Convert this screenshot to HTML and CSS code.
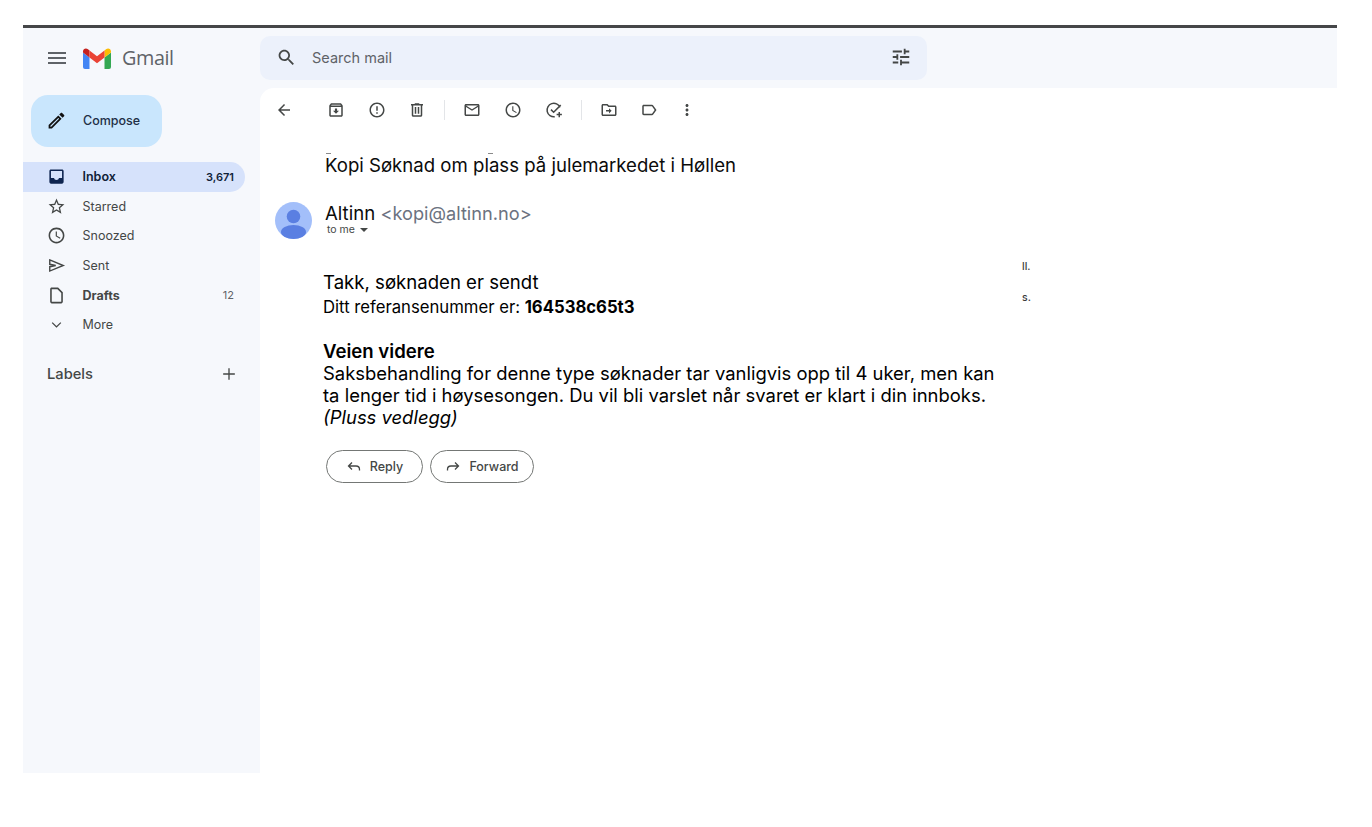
FILE: index.html
```html
<!DOCTYPE html>
<html lang="en">
<head>
<meta charset="utf-8">
<title>Gmail</title>
<link rel="stylesheet" href="styles.css">
</head>
<body>
<div class="frame">
  <aside class="sidebar">
    <div class="brand">
      <svg class="ic ic-menu" viewBox="0 0 24 24"><path d="M3 18h18v-2H3v2zm0-5h18v-2H3v2zm0-7v2h18V6H3z"/></svg>
      <svg class="logo" viewBox="0 0 28 21">
        <path fill="#4285f4" d="M2 21h4.5V9.5L0 4.5V19a2 2 0 0 0 2 2z"/>
        <path fill="#34a853" d="M21.5 21H26a2 2 0 0 0 2-2V4.500l-6.500 5z"/>
        <path fill="#fbbc04" d="M21.500 2.500v7l6.500-5V3.500c0-2.700-3-4-5-2.200z"/>
        <path fill="#c5221f" d="M0 4.500l6.500 5v-7L5 1.300C3-.4 0 .8 0 3.500z"/>
        <path fill="#ea4335" d="M6.500 9.500v-7L14 8.200l7.500-5.700v7L14 15.200z"/>
      </svg>
      <span class="wordmark">Gmail</span>
    </div>
    <button class="compose">
      <svg class="ic ic-pencil" viewBox="0 0 24 24"><path d="M3 17.250V21h3.750L17.810 9.940l-3.750-3.750L3 17.250zM5.920 19H5v-.92l9.060-9.060.92.92L5.920 19zM20.710 5.630l-2.340-2.340c-.2-.2-.45-.29-.71-.29s-.51.1-.7.29l-1.830 1.830 3.750 3.750 1.830-1.830c.39-.39.39-1.020 0-1.410z"/></svg>
      <span>Compose</span>
    </button>
    <nav class="nav">
      <a class="row active">
        <svg class="ic" viewBox="0 0 24 24"><path fill-rule="evenodd" d="M19 3H5c-1.100 0-2 .9-2 2v14c0 1.100.9 2 2 2h14c1.100 0 2-.9 2-2V5c0-1.100-.9-2-2-2zm0 11h-4c0 1.660-1.350 2.500-3 2.500S9 15.660 9 14H5V5h14v9z"/></svg>
        <span class="label">Inbox</span><span class="count">3,671</span>
      </a>
      <a class="row">
        <svg class="ic" viewBox="0 0 24 24"><path d="M22 9.240l-7.190-.62L12 2 9.190 8.630 2 9.240l5.460 4.730L5.820 21 12 17.270 18.180 21l-1.630-7.030L22 9.240zM12 15.400l-3.760 2.270 1-4.280-3.320-2.880 4.380-.38L12 6.100l1.710 4.040 4.380.38-3.320 2.880 1 4.280L12 15.400z"/></svg>
        <span class="label">Starred</span>
      </a>
      <a class="row">
        <svg class="ic" viewBox="0 0 24 24"><path d="M11.990 2C6.470 2 2 6.480 2 12s4.470 10 9.990 10C17.520 22 22 17.520 22 12S17.520 2 11.990 2zM12 20c-4.420 0-8-3.580-8-8s3.580-8 8-8 8 3.580 8 8-3.580 8-8 8zm.5-13H11v6l5.250 3.150.75-1.230-4.500-2.670z"/></svg>
        <span class="label">Snoozed</span>
      </a>
      <a class="row">
        <svg class="ic ic-sent" viewBox="0 0 24 24"><path d="M3.500 5L20.500 12 3.500 19v-5.500L11 12 3.500 10.500z"/></svg>
        <span class="label">Sent</span>
      </a>
      <a class="row strong">
        <svg class="ic" viewBox="0 0 24 24"><path d="M6 2c-1.100 0-2 .9-2 2v16c0 1.100.9 2 2 2h12c1.100 0 2-.9 2-2V8l-6-6H6zm0 2h7.200L18 8.800V20H6V4z"/></svg>
        <span class="label">Drafts</span><span class="count light">12</span>
      </a>
      <a class="row">
        <svg class="ic" viewBox="0 0 24 24"><path d="M16.900 9.100L12 14 7.100 9.100 6 10.200l6 6 6-6z"/></svg>
        <span class="label">More</span>
      </a>
    </nav>
    <div class="labels">
      <span>Labels</span>
      <svg class="ic" viewBox="0 0 24 24"><path d="M19 12.800h-6.200V19h-1.600v-6.200H5v-1.600h6.200V5h1.600v6.200H19z"/></svg>
    </div>
  </aside>

  <main class="main">
    <div class="search">
      <svg class="ic ic-search" viewBox="0 0 24 24"><path d="M15.500 14h-.79l-.28-.27C15.410 12.590 16 11.110 16 9.500 16 5.910 13.090 3 9.500 3S3 5.910 3 9.500 5.910 16 9.500 16c1.610 0 3.090-.59 4.230-1.570l.27.28v.79l5 4.990L20.490 19l-4.990-5zm-6 0C7.010 14 5 11.990 5 9.500S7.010 5 9.500 5 14 7.010 14 9.500 11.990 14 9.500 14z"/></svg>
      <span class="placeholder">Search mail</span>
      <svg class="ic ic-tune" viewBox="0 0 24 24"><path d="M3 17v2h6v-2H3zM3 5v2h10V5H3zm10 16v-2h8v-2h-8v-2h-2v6h2zM7 9v2H3v2h4v2h2V9H7zm14 4v-2H11v2h10zm-6-4h2V7h4V5h-4V3h-2v6z"/></svg>
    </div>
    <section class="panel">
      <div class="toolbar">
        <svg class="tool back" viewBox="0 0 24 24"><path d="M20 11H7.830l5.590-5.590L12 4l-8 8 8 8 1.410-1.410L7.830 13H20v-2z"/></svg>
        <div class="tool-group first">
          <svg class="tool" viewBox="0 0 24 24"><path d="M20.540 5.230l-1.390-1.680C18.880 3.210 18.470 3 18 3H6c-.47 0-.88.21-1.160.55L3.460 5.230C3.170 5.570 3 6.020 3 6.500V19c0 1.100.9 2 2 2h14c1.100 0 2-.9 2-2V6.500c0-.48-.17-.93-.46-1.270zM6.240 5h11.520l.81.97H5.440l.8-.97zM5 19V8h14v11H5zm8.450-9h-2.900v3H8l4 4 4-4h-2.550z"/></svg>
          <svg class="tool" viewBox="0 0 24 24"><path d="M12 2C6.480 2 2 6.480 2 12s4.480 10 10 10 10-4.480 10-10S17.520 2 12 2zm0 18c-4.420 0-8-3.580-8-8s3.580-8 8-8 8 3.580 8 8-3.580 8-8 8zM11 7h2v6h-2zm0 8h2v2h-2z"/></svg>
          <svg class="tool" viewBox="0 0 24 24"><path d="M15 4V3H9v1H4v2h1v13c0 1.100.9 2 2 2h10c1.100 0 2-.9 2-2V6h1V4h-5zm2 15H7V6h10v13zM9 8h2v9H9zm4 0h2v9h-2z"/></svg>
        </div>
        <span class="sep"></span>
        <div class="tool-group">
          <svg class="tool" viewBox="0 0 24 24"><path d="M22 6c0-1.100-.9-2-2-2H4c-1.100 0-2 .9-2 2v12c0 1.100.9 2 2 2h16c1.100 0 2-.9 2-2V6zm-2 0l-8 5-8-5h16zm0 12H4V8l8 5 8-5v10z"/></svg>
          <svg class="tool" viewBox="0 0 24 24"><path d="M11.990 2C6.470 2 2 6.480 2 12s4.470 10 9.990 10C17.520 22 22 17.520 22 12S17.520 2 11.990 2zM12 20c-4.420 0-8-3.580-8-8s3.580-8 8-8 8 3.580 8 8-3.580 8-8 8zm.5-13H11v6l5.250 3.150.75-1.230-4.500-2.670z"/></svg>
          <svg class="tool stroke" viewBox="0 0 24 24"><path d="M20 8.500A9 9 0 1 0 13 21M8 11.500l3.500 3.500L21 5.500M19 14.500v7M15.500 18h7"/></svg>
        </div>
        <span class="sep"></span>
        <div class="tool-group">
          <svg class="tool" viewBox="0 0 24 24"><path d="M20 6h-8l-2-2H4c-1.100 0-1.990.9-1.990 2L2 18c0 1.100.9 2 2 2h16c1.100 0 2-.9 2-2V8c0-1.100-.9-2-2-2zm0 12H4V6h5.170l2 2H20v10zm-8-4H8v-2h4V9.500l3.500 3.500-3.500 3.500V14z"/></svg>
          <svg class="tool" viewBox="0 0 24 24"><path d="M17.630 5.840C17.270 5.330 16.670 5 16 5L5 5.010C3.900 5.010 3 5.900 3 7v10c0 1.100.9 1.990 2 1.990L16 19c.67 0 1.270-.33 1.630-.84L22 12l-4.370-6.160zM16 17H5V7h11l3.550 5L16 17z"/></svg>
          <svg class="tool more" viewBox="0 0 24 24"><path d="M12 8c1.100 0 2-.9 2-2s-.9-2-2-2-2 .9-2 2 .9 2 2 2zm0 2c-1.100 0-2 .9-2 2s.9 2 2 2 2-.9 2-2-.9-2-2-2zm0 6c-1.100 0-2 .9-2 2s.9 2 2 2 2-.9 2-2-.9-2-2-2z"/></svg>
        </div>
      </div>

      <h1 class="subject">Kopi Søknad om plass på julemarkedet i Høllen</h1>

      <div class="sender">
        <svg class="avatar" viewBox="0 0 37 37">
          <circle cx="18.500" cy="18.500" r="18.500" fill="#a3bffa"/>
          <circle cx="18.500" cy="14.500" r="6.800" fill="#5a7fe2"/>
          <ellipse cx="18.500" cy="30" rx="12.500" ry="7" fill="#5a7fe2"/>
        </svg>
        <div class="sender-text">
          <div class="from"><span class="name">Altinn</span> <span class="addr">&lt;kopi@altinn.no&gt;</span></div>
          <div class="tome">to me <span class="caret"></span></div>
        </div>
      </div>

      <article class="message">
        <p class="thanks">Takk, søknaden er sendt</p>
        <p class="ref">Ditt referansenummer er: <b>164538c65t3</b></p>
        <h2 class="next">Veien videre</h2>
        <p class="copy">Saksbehandling for denne type søknader tar vanligvis opp til 4 uker, men kan<br>ta lenger tid i høysesongen. Du vil bli varslet når svaret er klart i din innboks.<br><i>(Pluss vedlegg)</i></p>
      </article>

      <div class="actions">
        <button class="pill reply">
          <svg class="pill-ic" viewBox="0 0 16 16"><path d="M6 3.500L2.500 7 6 10.500M2.500 7H10c2.200 0 3.500 1.400 3.500 3.500v1"/></svg>
          <span>Reply</span>
        </button>
        <button class="pill forward">
          <svg class="pill-ic" viewBox="0 0 16 16"><path d="M10 3.500L13.500 7 10 10.500M13.500 7H6c-2.200 0-3.500 1.400-3.500 3.500v1"/></svg>
          <span>Forward</span>
        </button>
      </div>

      <span class="stray stray-a">ll.</span>
      <span class="stray stray-b">s.</span>
      <span class="clip clip-a"></span>
      <span class="clip clip-b"></span>
    </section>
  </main>
</div>
</body>
</html>
```
FILE: styles.css
```css
* { box-sizing: border-box; }
html, body { margin: 0; background: #fff; }
body {
  padding: 25px 35px 0 23px;
  font-family: Inter, "Liberation Sans", sans-serif;
  color: #000;
}
p, h1, h2 { margin: 0; font-weight: 400; }
button { font-family: inherit; border: 0; background: none; padding: 0; }

.frame {
  width: 1314px;
  height: 748px;
  border-top: 3px solid #454648;
  background: #f6f8fc;
  display: grid;
  grid-template-columns: 237px 1fr;
}

.ic { width: 20px; height: 20px; fill: #444746; flex: none; }

/* sidebar */
.sidebar { display: flex; flex-direction: column; }
.brand { height: 60px; display: flex; align-items: center; padding-left: 22px; }
.ic-menu { width: 24px; height: 24px; fill: #5f6368; }
.logo { width: 28px; height: 21px; margin-left: 14px; }
.wordmark {
  margin-left: 11px;
  padding-bottom: 2px;
  font-family: "Open Sans", sans-serif;
  font-size: 19.800px;
  letter-spacing: -0.4px;
  color: #5f6368;
}
.compose {
  margin: 7px 0 0 8px;
  width: 131px;
  height: 52px;
  border-radius: 17px;
  background: #c9e6fd;
  display: flex;
  align-items: center;
  padding: 0 0 2px 15px;
  gap: 16px;
  font-size: 12.500px;
  font-weight: 500;
  color: #1f2f46;
}
.ic-pencil { fill: #111; width: 21px; height: 21px; }
.nav { margin-top: 15px; display: flex; flex-direction: column; }
.row {
  height: 29.600px;
  width: 222px;
  display: flex;
  align-items: center;
  padding: 0 11px 0 24px;
  font-size: 12.500px;
  color: #444746;
  border-radius: 0 15px 15px 0;
}
.row .ic { width: 19px; height: 19px; }
.row .ic-sent { fill: none; stroke: #444746; stroke-width: 1.800; }
.row .label { margin-left: 16.500px; flex: 1; }
.row.active { background: #d6e2fb; color: #0f2138; font-weight: 600; }
.row.active .ic { fill: #0f2550; }
.row.strong .label { font-weight: 700; }
.count { font-size: 11px; }
.count.light { font-weight: 400; color: #5f6368; }
.labels {
  margin: 22px 22px 0 24px;
  height: 24px;
  display: flex;
  align-items: center;
  justify-content: space-between;
  font-size: 14.700px;
  font-weight: 500;
  color: #444746;
}
.labels .ic { width: 20px; height: 20px; margin-right: -1px; }

/* top search */
.main { display: flex; flex-direction: column; min-width: 0; }
.search {
  margin-top: 8px;
  width: 667px;
  height: 44px;
  border-radius: 10px;
  background: #ecf1fb;
  display: flex;
  align-items: center;
  padding: 0 15px 2px 16px;
}
.ic-search { fill: #444746; width: 21px; height: 21px; }
.placeholder { margin-left: 15px; flex: 1; font-size: 14.500px; color: #5f6368; }
.ic-tune { fill: #444746; width: 22px; height: 22px; }

/* message panel */
.panel {
  position: relative;
  margin-top: 8px;
  flex: 1;
  background: #fff;
  border-radius: 14px 0 0 0;
  padding-left: 15px;
}
.toolbar { height: 20px; margin-top: 12px; display: flex; align-items: center; }
.tool { width: 18px; height: 18px; fill: #444746; flex: none; }
.tool.stroke { fill: none; stroke: #444746; stroke-width: 2; }
.tool.more { margin-left: -3px; }
.tool-group { display: flex; gap: 22.700px; }
.tool-group.first { margin-left: 34px; }
.sep { width: 1px; height: 20px; background: #e3e5e8; margin: 0 18px; }

.subject { margin: 34px 0 0 50px; font-size: 18.600px; line-height: 22px; color: #0b0b0b; }

.sender { margin-top: 26px; display: flex; align-items: flex-start; }
.avatar { width: 37px; height: 37px; flex: none; }
.sender-text { margin-left: 13px; }
.from { font-size: 18.600px; line-height: 22px; }
.name { color: #0b0b0b; }
.addr { color: #6b7280; font-size: 18.200px; }
.tome { margin: -1px 0 0 2px; font-size: 10.500px; line-height: 13px; color: #444746; display: flex; align-items: center; gap: 5px; }
.caret { width: 0; height: 0; border: 4px solid transparent; border-top-color: #444746; border-bottom: 0; }

.message { margin: 32px 0 0 48px; }
.thanks { font-size: 18.600px; line-height: 22px; }
.ref { margin-top: 3px; font-size: 16.700px; line-height: 22px; }
.ref b { font-weight: 700; }
.next { margin-top: 22px; font-size: 18.600px; line-height: 22px; font-weight: 600; }
.copy { font-size: 18.440px; line-height: 22px; }

.actions { margin: 22px 0 0 51px; display: flex; gap: 7px; }
.pill {
  height: 33px;
  border: 1px solid #747775;
  border-radius: 17px;
  display: flex;
  align-items: center;
  justify-content: center;
  gap: 8px;
  font-size: 12.500px;
  font-weight: 500;
  color: #444746;
  background: #fff;
}
.reply { width: 97px; }
.forward { width: 104px; }
.pill-ic { width: 16px; height: 16px; fill: none; stroke: #444746; stroke-width: 1.300; }

/* leftovers of content peeking out from behind the capture */
.stray { position: absolute; left: 762px; font-size: 10.500px; line-height: 12px; color: #3c3c3c; font-weight: 500; }
.stray-a { top: 173px; }
.stray-b { top: 204px; }
.clip { position: absolute; top: 65px; height: 1px; width: 5px; background: #8a8a8a; }
.clip-a { left: 66px; }
.clip-b { left: 228px; }
```
